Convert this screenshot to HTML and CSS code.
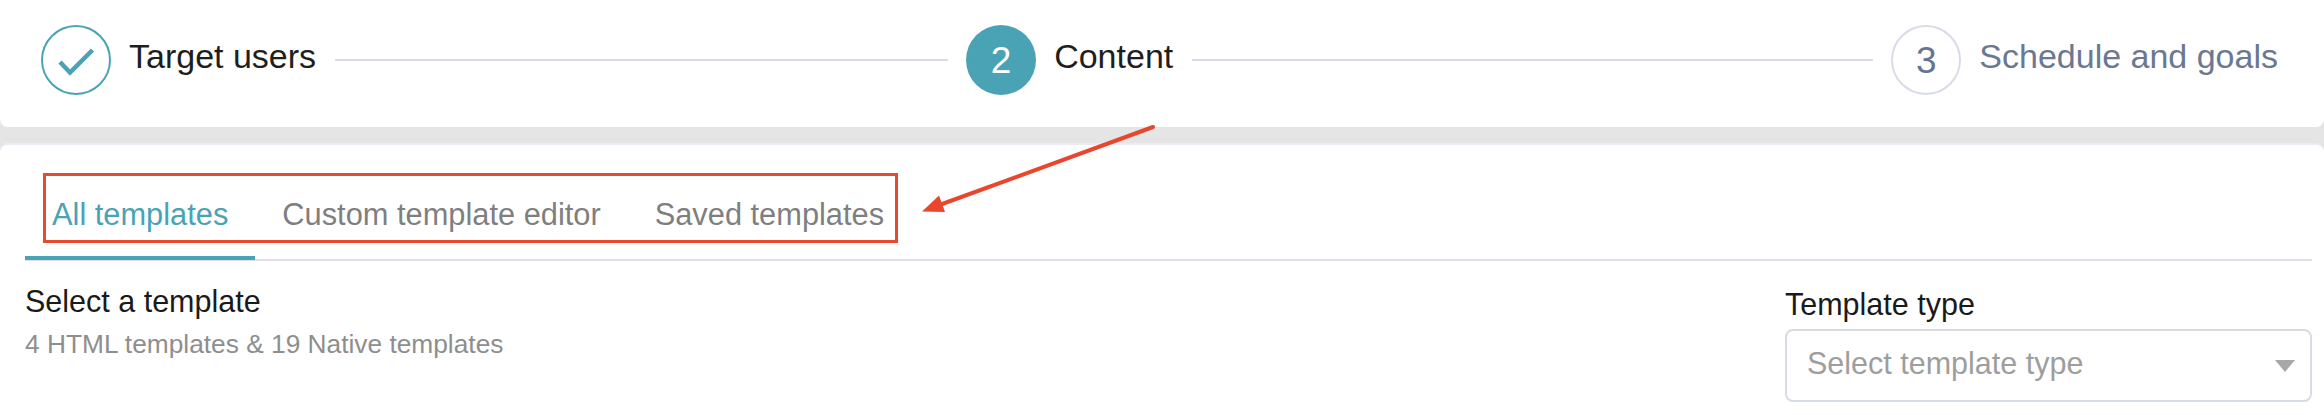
FILE: index.html
```html
<!DOCTYPE html>
<html lang="en">
<head>
<meta charset="utf-8">
<title>Content</title>
<link rel="stylesheet" href="styles.css">
</head>
<body>
<div class="page">
  <header class="stepper">
    <div class="step step-grow">
      <span class="circle circle-done">
        <svg class="check" width="70" height="70" viewBox="0 0 70 70"><polyline points="19,37 29,47.5 51.5,25" fill="none" stroke="#4aa3b5" stroke-width="4.5" stroke-linecap="butt" stroke-linejoin="miter"/></svg>
      </span>
      <span class="step-label label-done">Target users</span>
      <span class="step-line"></span>
    </div>
    <div class="step step-grow">
      <span class="circle circle-active">2</span>
      <span class="step-label label-active">Content</span>
      <span class="step-line"></span>
    </div>
    <div class="step">
      <span class="circle circle-todo">3</span>
      <span class="step-label label-todo">Schedule and goals</span>
    </div>
  </header>

  <main class="card">
    <nav class="tabs">
      <span class="tab tab-active">All templates</span>
      <span class="tab">Custom template editor</span>
      <span class="tab">Saved templates</span>
    </nav>
    <div class="highlight-box"></div>

    <section class="row">
      <div class="intro">
        <div class="intro-title">Select a template</div>
        <div class="intro-sub">4 HTML templates &amp; 19 Native templates</div>
      </div>
      <div class="filter">
        <div class="filter-label">Template type</div>
        <div class="select">
          <span class="select-placeholder">Select template type</span>
          <span class="select-caret"></span>
        </div>
      </div>
    </section>
  </main>

  <svg class="annotation" width="2324" height="415" viewBox="0 0 2324 415">
    <line x1="1153" y1="127" x2="938" y2="205.5" stroke="#e8472d" stroke-width="4" stroke-linecap="round"/>
    <polygon points="922,211.5 945,212 939,195.5" fill="#e8472d"/>
  </svg>
</div>
</body>
</html>
```

FILE: styles.css
```css
* {
  box-sizing: border-box;
}

html, body {
  margin: 0;
  padding: 0;
}

body {
  width: 2324px;
  height: 415px;
  overflow: hidden;
  background: #e5e5e5;
  font-family: "Liberation Sans", Arial, sans-serif;
  color: #1c1c1c;
}

.page {
  position: relative;
  width: 2324px;
  height: 415px;
}

/* ---------- Stepper ---------- */
.stepper {
  display: flex;
  align-items: center;
  height: 127px;
  padding: 25px 46px 32px 41px;
  background: #ffffff;
  border-radius: 0 0 8px 8px;
}

.step {
  display: flex;
  align-items: center;
  height: 70px;
}

.step-grow {
  flex: 1 1 0;
  min-width: 0;
}

.circle {
  flex: none;
  width: 70px;
  height: 70px;
  border-radius: 50%;
  display: flex;
  align-items: center;
  justify-content: center;
  font-size: 37px;
  line-height: 1;
}

.circle-done {
  border: 2px solid #4aa3b5;
}

.circle-done .check {
  flex: none;
  margin: -2px;
}

.circle-active {
  background: #4aa3b5;
  color: #ffffff;
}

.circle-todo {
  border: 2px solid #d8dce9;
  color: #67758e;
}

.step-label {
  flex: none;
  margin-left: 18px;
  margin-bottom: 8px;
  font-size: 34px;
  line-height: 34px;
  white-space: nowrap;
}

.label-done,
.label-active {
  color: #1e1e1e;
}

.label-todo {
  color: #6b7891;
}

.step-line {
  flex: 1 1 auto;
  height: 2px;
  margin: 0 18px 0 19px;
  background: #d8dce9;
}

/* ---------- Card ---------- */
.card {
  position: relative;
  margin-top: 18px;
  height: 270px;
  padding: 0 12px 0 25px;
  background: #ffffff;
  border-radius: 8px 8px 0 0;
  box-shadow: 0 -2px 0 #ebecf3;
}

.tabs {
  display: flex;
  border-bottom: 2px solid #dde0ec;
}

.tab {
  padding: 52px 27px 23px 27px;
  margin-bottom: -1px;
  font-size: 30.8px;
  line-height: 36px;
  color: #7f7f7f;
  border-bottom: 4px solid transparent;
  white-space: nowrap;
}

.tab-active {
  color: #4aa3b5;
  border-bottom-color: #4aa3b5;
}

.highlight-box {
  position: absolute;
  left: 43px;
  top: 28px;
  width: 855px;
  height: 70px;
  border: 3px solid #e84a2f;
}

.row {
  display: flex;
  justify-content: space-between;
  align-items: flex-start;
  margin-top: 22px;
}

.intro-title {
  font-size: 30.5px;
  line-height: 36px;
  color: #1a1a1a;
}

.intro-sub {
  margin-top: 9px;
  font-size: 26.3px;
  line-height: 32px;
  color: #8e8e8e;
}

.filter {
  width: 527px;
  padding-top: 3px;
}

.filter-label {
  font-size: 30.5px;
  line-height: 36px;
  color: #1a1a1a;
}

.select {
  display: flex;
  align-items: center;
  justify-content: space-between;
  height: 73px;
  margin-top: 7px;
  padding: 0 15px 5px 20px;
  border: 2px solid #d6dbe7;
  border-radius: 8px;
  background: #ffffff;
}

.select-placeholder {
  font-size: 30.5px;
  line-height: 36px;
  color: #9e9e9e;
  white-space: nowrap;
}

.select-caret {
  flex: none;
  width: 0;
  height: 0;
  margin-top: 5px;
  border-left: 10.5px solid transparent;
  border-right: 10.5px solid transparent;
  border-top: 12px solid #a8a8a8;
}

/* ---------- Annotation overlay ---------- */
.annotation {
  position: absolute;
  left: 0;
  top: 0;
  pointer-events: none;
}
```
